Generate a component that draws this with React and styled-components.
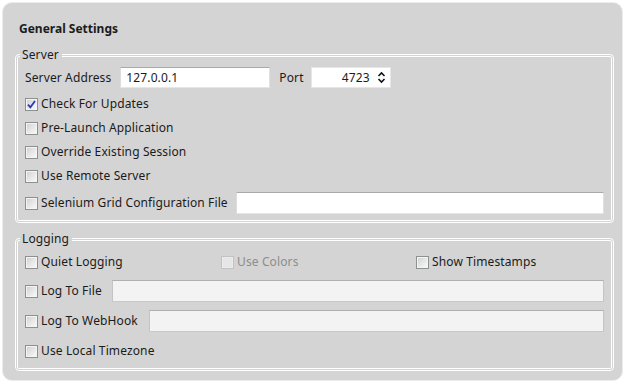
import React from "react";
import styled, { createGlobalStyle } from "styled-components";

const GlobalStyle = createGlobalStyle`
  html, body {
    margin: 0;
    padding: 0;
    background: #ffffff;
  }
  body {
    font-family: "Noto Sans", "Open Sans", sans-serif;
    font-size: 12px;
    letter-spacing: 0.12px;
    color: #1b1b1b;
  }
`;

const Panel = styled.div`
  margin: 2px;
  width: 621px;
  height: 379px;
  box-sizing: border-box;
  background: #d4d4d4;
  border: 1px solid #ececec;
  border-radius: 10px;
  padding: 17px 0 0 12px;
`;

const Title = styled.div`
  font-weight: bold;
  letter-spacing: 0;
  line-height: 18px;
  padding-left: 4px;
`;

const Group = styled.fieldset`
  margin: ${(p) => p.$top}px 0 0 0;
  padding: 0;
  width: 599px;
  box-sizing: border-box;
  border: 3px double #ffffff;
  border-radius: 4px;
  min-width: 0;
`;

const Legend = styled.legend`
  margin-left: 2px;
  padding: 0 3px 0 2px;
  line-height: 16px;
`;

const GroupBody = styled.div`
  padding: ${(p) => p.$top}px 7px 5px 7px;
`;

const Row = styled.div`
  display: flex;
  align-items: center;
  height: ${(p) => p.$h || 24}px;
  margin-top: ${(p) => p.$mt || 0}px;
  gap: ${(p) => p.$gap ?? 10}px;
  white-space: nowrap;
`;

const ThreeCols = styled.div`
  display: grid;
  grid-template-columns: 196px 195px 1fr;
  align-items: center;
  height: 24px;
  white-space: nowrap;
`;

const Label = styled.span`
  line-height: 16px;
  color: ${(p) => (p.$disabled ? "#8d8d8d" : "inherit")};
`;

const TextInput = styled.div`
  box-sizing: border-box;
  height: ${(p) => p.$h || 21}px;
  width: ${(p) => (p.$w ? `${p.$w}px` : "auto")};
  flex: ${(p) => (p.$w ? "none" : "1")};
  background: ${(p) => (p.$disabled ? "#f3f3f3" : "#ffffff")};
  border: 1px solid;
  border-color: #a9a9a9 #e0e0e0 #e6e6e6 #dcdcdc;
  ${(p) => p.$disabled && "border-color: #b0b0b0 #c4c4c4 #c8c8c8 #c4c4c4;"}
  padding: 0 5px;
  display: flex;
  align-items: center;
  line-height: 16px;
`;

const NumberBox = styled.div`
  box-sizing: border-box;
  width: 80px;
  height: 21px;
  margin-left: -2px;
  background: #ffffff;
  border: 1px solid #e6e6e6;
  display: flex;
  align-items: center;
  justify-content: flex-end;
  padding-right: 4px;
`;

const NumberValue = styled.span`
  line-height: 16px;
  margin-right: 7px;
`;

const Box = styled.span`
  box-sizing: border-box;
  flex: none;
  width: 13px;
  height: 13px;
  border: 1px solid ${(p) => (p.$disabled ? "#c2c2c2" : "#8e8f8f")};
  background: ${(p) =>
    p.$disabled
      ? "#e6e6e6"
      : "linear-gradient(135deg, #cfcfcf 0%, #e4e4e4 45%, #fbfbfb 100%)"};
  box-shadow: inset 0 0 0 1px ${(p) => (p.$disabled ? "#ececec" : "#f4f4f4")};
  display: flex;
  align-items: center;
  justify-content: center;
`;

const Check = styled.label`
  display: flex;
  align-items: center;
  gap: 3px;
`;

function CheckBox({ label, checked, disabled }) {
  return (
    <Check>
      <Box $checked={checked} $disabled={disabled}>
        {checked && (
          <svg width="9" height="9" viewBox="0 0 9 9">
            <path
              d="M1 4.6 L3.4 7.4 L8 1"
              fill="none"
              stroke="#2b3ab4"
              strokeWidth="1.8"
            />
          </svg>
        )}
      </Box>
      <Label $disabled={disabled}>{label}</Label>
    </Check>
  );
}

function Spinner() {
  return (
    <svg width="9" height="15" viewBox="0 0 9 15">
      <path d="M1.5 6 L4.5 3 L7.5 6" fill="none" stroke="#111" strokeWidth="1.6" />
      <path d="M1.5 9 L4.5 12 L7.5 9" fill="none" stroke="#111" strokeWidth="1.6" />
    </svg>
  );
}

export default function App() {
  return (
    <>
      <GlobalStyle />
      <Panel>
        <Title>General Settings</Title>

        <Group $top={9}>
          <Legend>Server</Legend>
          <GroupBody $top={4}>
            <Row $h={21} $gap={9}>
              <Label>Server Address</Label>
              <TextInput $w={150}>127.0.0.1</TextInput>
              <Label>Port</Label>
              <NumberBox>
                <NumberValue>4723</NumberValue>
                <Spinner />
              </NumberBox>
            </Row>
            <Row $mt={4}>
              <CheckBox label="Check For Updates" checked />
            </Row>
            <Row>
              <CheckBox label="Pre-Launch Application" />
            </Row>
            <Row>
              <CheckBox label="Override Existing Session" />
            </Row>
            <Row>
              <CheckBox label="Use Remote Server" />
            </Row>
            <Row $mt={3} $gap={8}>
              <CheckBox label="Selenium Grid Configuration File" />
              <TextInput $h={22} />
            </Row>
          </GroupBody>
        </Group>

        <Group $top={8}>
          <Legend>Logging</Legend>
          <GroupBody $top={3}>
            <ThreeCols>
              <CheckBox label="Quiet Logging" />
              <CheckBox label="Use Colors" disabled />
              <CheckBox label="Show Timestamps" />
            </ThreeCols>
            <Row $h={30} $mt={2} $gap={10}>
              <CheckBox label="Log To File" />
              <TextInput $h={22} $disabled />
            </Row>
            <Row $h={30} $gap={11}>
              <CheckBox label="Log To WebHook" />
              <TextInput $h={22} $disabled />
            </Row>
            <Row $mt={3}>
              <CheckBox label="Use Local Timezone" />
            </Row>
          </GroupBody>
        </Group>
      </Panel>
    </>
  );
}
